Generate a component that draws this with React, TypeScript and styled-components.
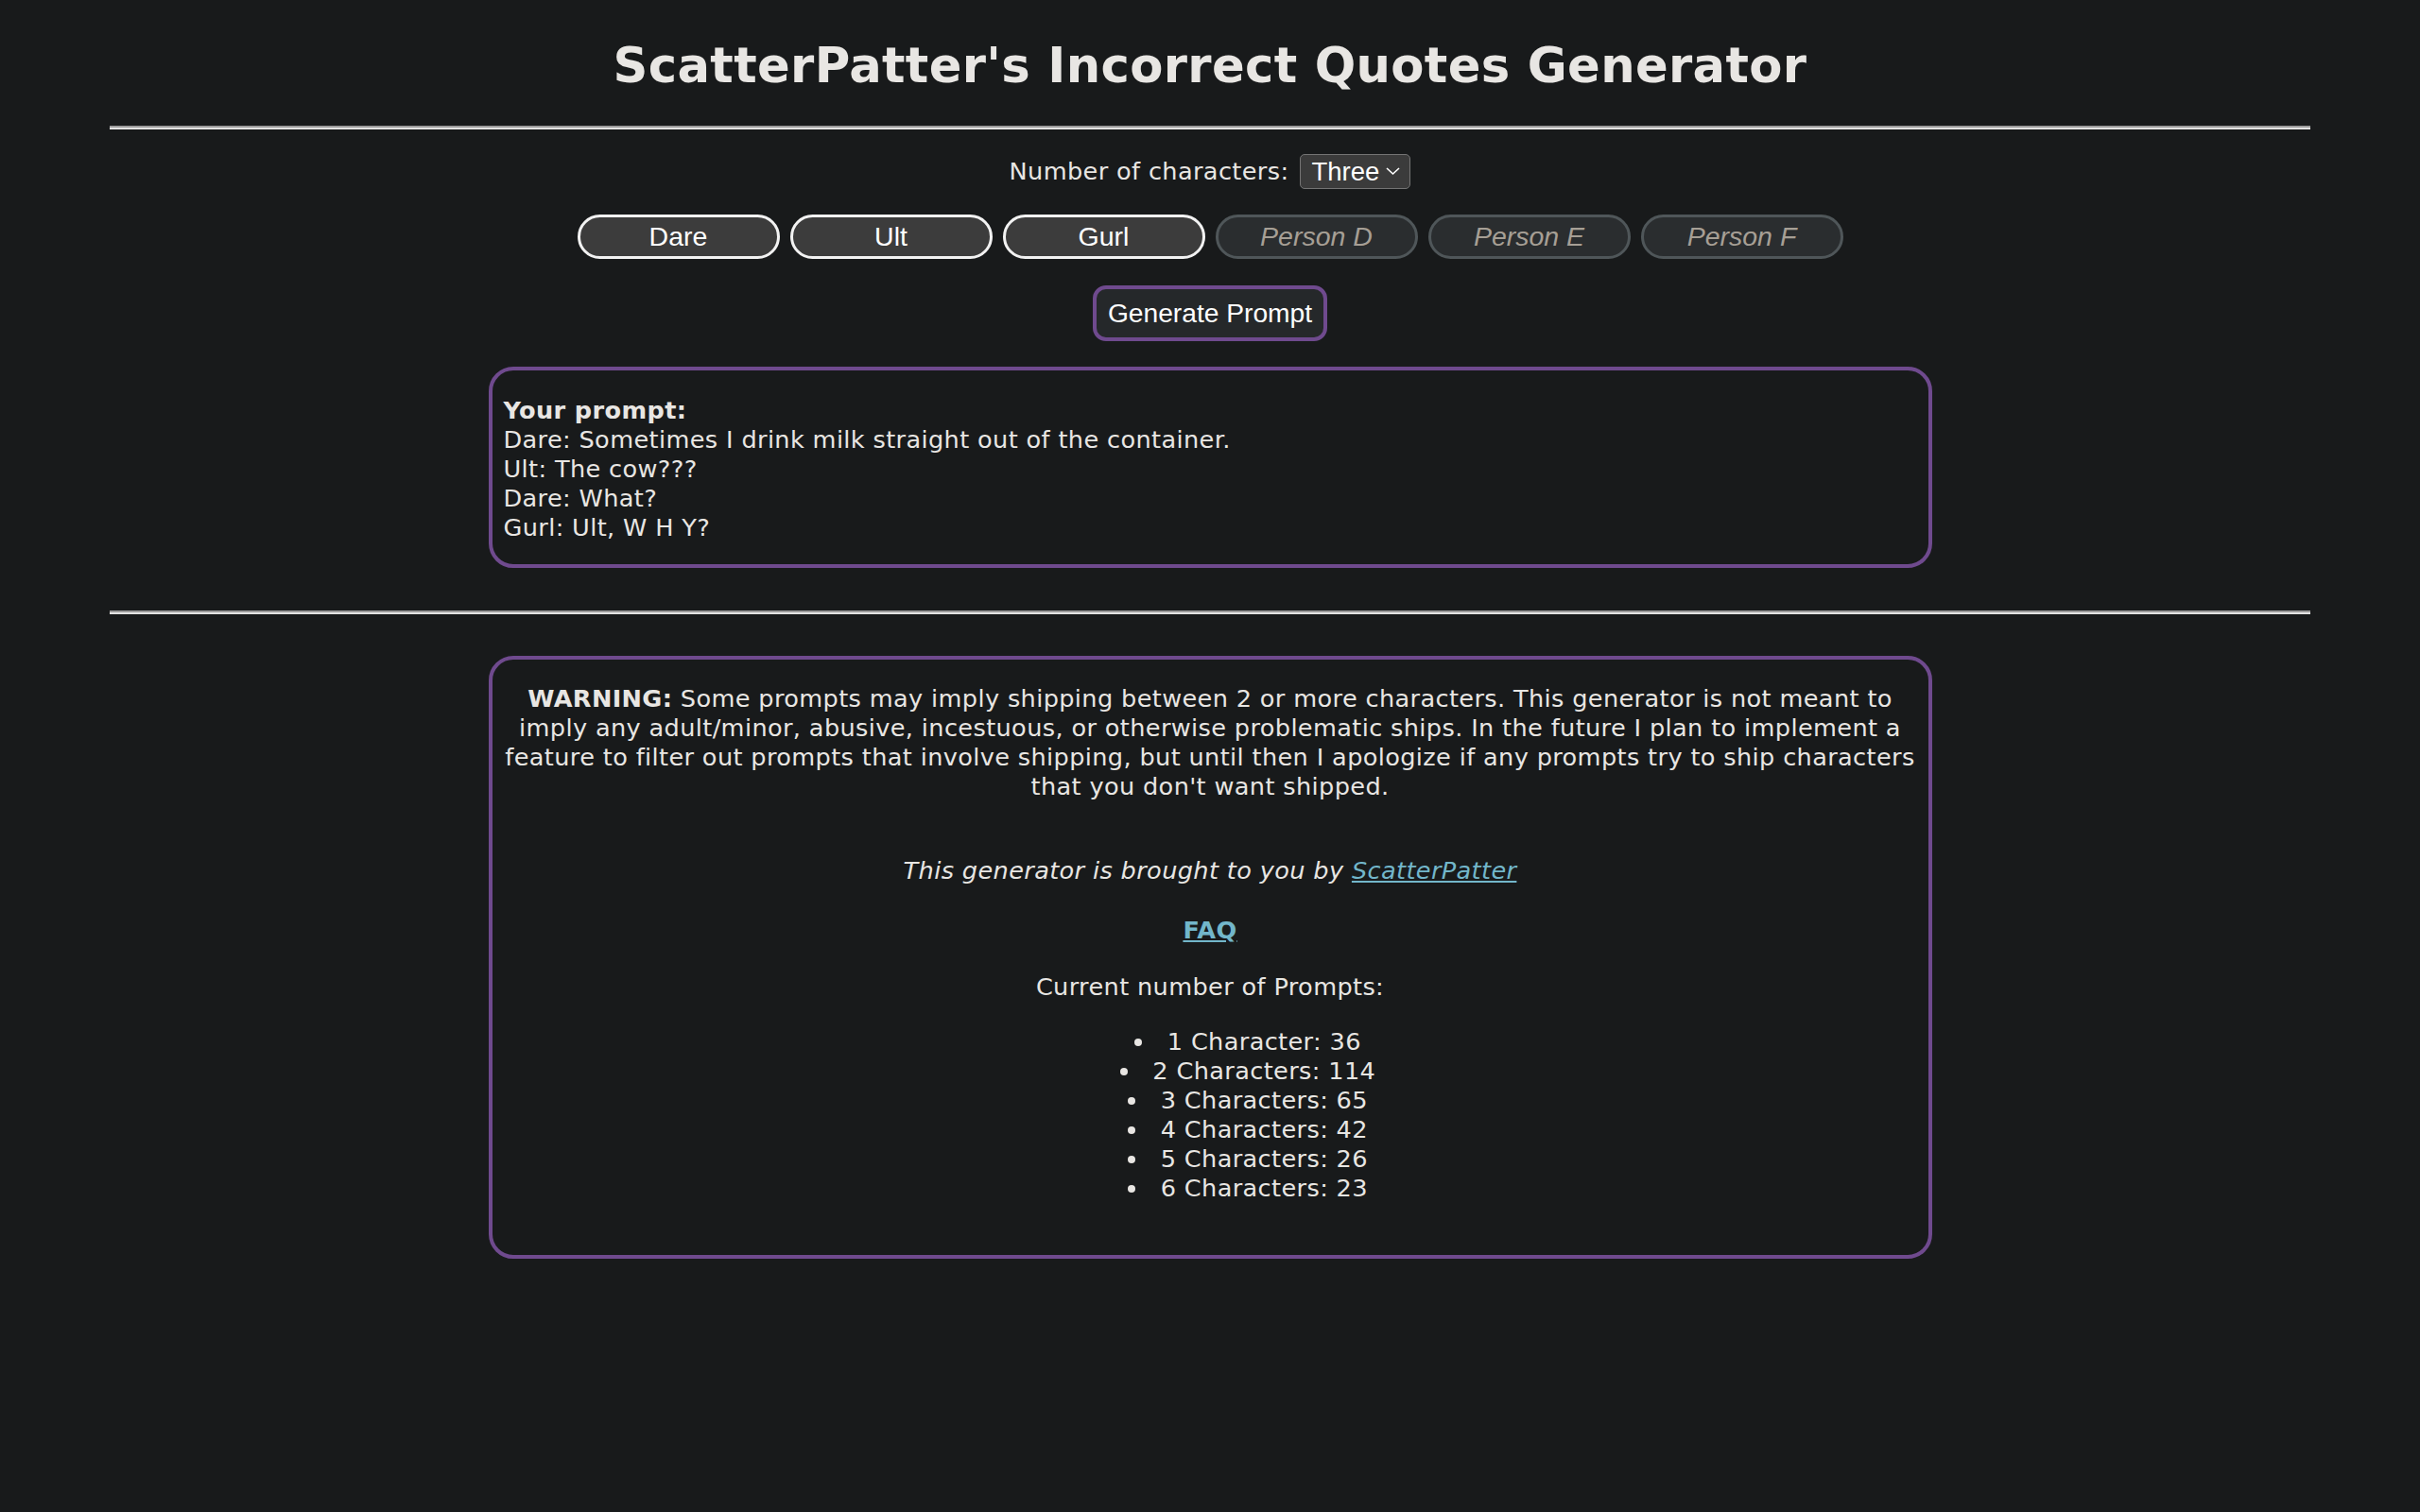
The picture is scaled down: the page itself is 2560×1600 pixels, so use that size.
import React, { useState } from "react";
import styled, { createGlobalStyle } from "styled-components";

const Global = createGlobalStyle`
  html, body { margin: 0; padding: 0; background: #181a1b; }
  body {
    color: #e8e6e3;
    font-family: "DejaVu Sans", Verdana, sans-serif;
    font-size: 25.6px;
    line-height: 31px;
    letter-spacing: 0.36px;
  }
  #root { min-height: 1600px; background: #181a1b; }
`;

const Page = styled.div`
  display: flex;
  flex-direction: column;
  align-items: center;
  padding-bottom: 40px;
`;

const Title = styled.h1`
  margin: 40px 0 0;
  font-size: 51.2px;
  line-height: 59.6px;
  font-weight: bold;
  letter-spacing: 0.35px;
  text-align: center;
  color: #e8e6e3;
`;

const Rule = styled.hr<{ $top: number }>`
  align-self: stretch;
  margin: ${(p) => p.$top}px 116px 0;
  height: 0;
  border: none;
  border-top: 2px solid #9c9c9c;
  border-bottom: 2px solid #e2e2e2;
`;

const SelectRow = styled.div`
  margin-top: 26px;
  display: flex;
  align-items: center;
  gap: 12px;
  height: 37px;
`;

const SelectWrap = styled.div`
  position: relative;
  display: flex;
  align-items: center;
`;

const Select = styled.select`
  appearance: none;
  -webkit-appearance: none;
  width: 117px;
  height: 37px;
  box-sizing: border-box;
  padding: 0 30px 0 11px;
  background: #3b3b3b;
  color: #ffffff;
  border: 1.5px solid #747474;
  border-radius: 5px;
  font-family: "Liberation Sans", Arial, sans-serif;
  font-size: 27.5px;
  letter-spacing: 0;
  outline: none;
`;

const Chevron = styled.svg`
  position: absolute;
  right: 11px;
  top: 50%;
  transform: translateY(-50%);
  pointer-events: none;
`;

const ButtonRow = styled.div`
  margin-top: 27px;
  display: flex;
  gap: 11px;
`;

const CharButton = styled.button<{ $active: boolean }>`
  width: 214px;
  height: 47px;
  box-sizing: border-box;
  border-radius: 24px;
  border: 3px solid ${(p) => (p.$active ? "#f2f2f2" : "#4f5659")};
  background: ${(p) => (p.$active ? "#3c3c3c" : "#2a2d2f")};
  color: ${(p) => (p.$active ? "#ffffff" : "#a69f95")};
  font-style: ${(p) => (p.$active ? "normal" : "italic")};
  font-family: "Liberation Sans", Arial, sans-serif;
  font-size: 28.5px;
  letter-spacing: 0;
  padding: 0;
  cursor: pointer;
`;

const Generate = styled.button`
  margin-top: 28px;
  height: 59px;
  box-sizing: border-box;
  padding: 0 12px;
  border: 4px solid #6f4a8e;
  border-radius: 14px;
  background: #25282a;
  color: #ffffff;
  font-family: "Liberation Sans", Arial, sans-serif;
  font-size: 28.2px;
  letter-spacing: 0;
  cursor: pointer;
`;

const Box = styled.div<{ $top: number; $center?: boolean }>`
  margin-top: ${(p) => p.$top}px;
  width: 1527px;
  box-sizing: border-box;
  border: 4px solid #6f4a8e;
  border-radius: 26px;
  text-align: ${(p) => (p.$center ? "center" : "left")};
`;

const PromptBox = styled(Box)`
  padding: 27px 12px 23px;
`;

const WarnBox = styled(Box)`
  padding: 26px 6px 55px;
`;

const Line = styled.div``;

const Para = styled.p<{ $top?: number }>`
  margin: ${(p) => p.$top ?? 0}px 0 0;
`;

const Link = styled.a<{ $bold?: boolean }>`
  color: #72b6ca;
  text-decoration: underline;
  font-weight: ${(p) => (p.$bold ? "bold" : "normal")};
`;

const List = styled.ul`
  margin: 27px 0 0;
  padding: 0 0 0 80px;
  list-style-position: inside;
  list-style-type: disc;
`;

const counts = [
  ["1 Character", 36],
  ["2 Characters", 114],
  ["3 Characters", 65],
  ["4 Characters", 42],
  ["5 Characters", 26],
  ["6 Characters", 23],
] as const;

const chars = [
  { name: "Dare", active: true },
  { name: "Ult", active: true },
  { name: "Gurl", active: true },
  { name: "Person D", active: false },
  { name: "Person E", active: false },
  { name: "Person F", active: false },
];

export default function App() {
  const [num, setNum] = useState("3");
  return (
    <Page>
      <Global />
      <Title>ScatterPatter's Incorrect Quotes Generator</Title>
      <Rule $top={33} />
      <SelectRow>
        <span>Number of characters:</span>
        <SelectWrap>
          <Select value={num} onChange={(e) => setNum(e.target.value)}>
            <option value="1">One</option>
            <option value="2">Two</option>
            <option value="3">Three</option>
            <option value="4">Four</option>
            <option value="5">Five</option>
            <option value="6">Six</option>
          </Select>
          <Chevron width="15" height="9" viewBox="0 0 15 9">
            <path d="M1 1.5 L7.5 7.5 L14 1.5" fill="none" stroke="#ffffff" strokeWidth="1.6" />
          </Chevron>
        </SelectWrap>
      </SelectRow>
      <ButtonRow>
        {chars.map((c) => (
          <CharButton key={c.name} $active={c.active}>
            {c.name}
          </CharButton>
        ))}
      </ButtonRow>
      <Generate>Generate Prompt</Generate>
      <PromptBox $top={27}>
        <Line>
          <b>Your prompt:</b>
        </Line>
        <Line>Dare: Sometimes I drink milk straight out of the container.</Line>
        <Line>Ult: The cow???</Line>
        <Line>Dare: What?</Line>
        <Line>Gurl: Ult, W H Y?</Line>
      </PromptBox>
      <Rule $top={45} />
      <WarnBox $top={44} $center>
        <Para>
          <b>WARNING:</b> Some prompts may imply shipping between 2 or more characters. This
          generator is not meant to
          <br />
          imply any adult/minor, abusive, incestuous, or otherwise problematic ships. In the
          future I plan to implement a
          <br />
          feature to filter out prompts that involve shipping, but until then I apologize if any
          prompts try to ship characters
          <br />
          that you don't want shipped.
        </Para>
        <Para $top={58}>
          <i>
            This generator is brought to you by <Link href="#">ScatterPatter</Link>
          </i>
        </Para>
        <Para $top={32}>
          <Link href="#" $bold>
            FAQ
          </Link>
        </Para>
        <Para $top={29}>Current number of Prompts:</Para>
        <List>
          {counts.map(([label, n]) => (
            <li key={label}>
              {label}: {n}
            </li>
          ))}
        </List>
      </WarnBox>
    </Page>
  );
}
